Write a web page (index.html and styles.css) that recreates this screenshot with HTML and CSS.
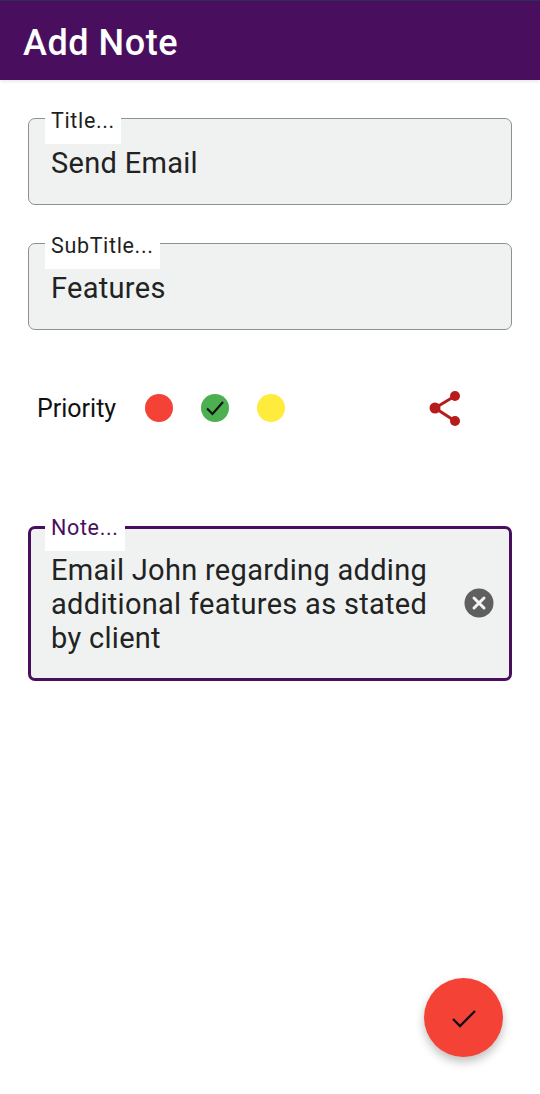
FILE: index.html
```html
<!DOCTYPE html>
<html lang="en">
<head>
    <meta charset="UTF-8">
    <meta name="viewport" content="width=device-width, initial-scale=1.0">
    <title>Add Note</title>
    <link rel="stylesheet" href="styles.css">
</head>
<body>
    <div class="app-bar">
        <h1>Add Note</h1>
    </div>

    <div class="content">
        <div class="field">
            <label class="field-label">Title...</label>
            <p class="field-text">Send Email</p>
        </div>

        <div class="field">
            <label class="field-label">SubTitle...</label>
            <p class="field-text">Features</p>
        </div>

        <div class="priority-row">
            <span class="priority-label">Priority</span>
            <span class="dot dot-red"></span>
            <span class="dot dot-green">
                <svg viewBox="0 0 28 28" width="28" height="28"><path d="M6 14.5l5.5 5.5 10.5-12" fill="none" stroke="#111" stroke-width="2.2"/></svg>
            </span>
            <span class="dot dot-yellow"></span>
            <svg class="share-icon" viewBox="0 0 36 40" width="36" height="40">
                <path d="M28 8L8 20l20 13" fill="none" stroke="#b71c1c" stroke-width="3"/>
                <circle cx="28" cy="8" r="5" fill="#b71c1c"/>
                <circle cx="8" cy="20" r="5.5" fill="#b71c1c"/>
                <circle cx="28" cy="33" r="5" fill="#b71c1c"/>
            </svg>
        </div>

        <div class="field field-focused">
            <label class="field-label">Note...</label>
            <p class="field-text">Email John regarding adding additional features as stated by client</p>
            <svg class="clear-icon" viewBox="0 0 30 30" width="30" height="30">
                <circle cx="15" cy="15" r="14.5" fill="#5f5f5f"/>
                <path d="M10 10l10 10M20 10L10 20" stroke="#f4f4f4" stroke-width="3" stroke-linecap="round"/>
            </svg>
        </div>
    </div>

    <button class="fab">
        <svg viewBox="0 0 28 28" width="28" height="28"><path d="M3 15l7 7L25 7" fill="none" stroke="#111" stroke-width="2.4"/></svg>
    </button>
</body>
</html>
```

FILE: styles.css
```css
* {
    box-sizing: border-box;
}

body {
    margin: 0;
    height: 1094px;
    overflow: hidden;
    font-family: Roboto, "Liberation Sans", sans-serif;
    background-color: #fff;
}

.app-bar {
    height: 80px;
    padding: 4px 23px 0;
    display: flex;
    align-items: center;
    background-color: #4a0e5e;
    border-top: 1px solid #2b2d55;
    box-shadow: 0 1px 4px rgba(0,0,0,0.12);
}

.app-bar h1 {
    margin: 0;
    font-size: 36px;
    font-weight: 500;
    letter-spacing: 0.55px;
    color: #fff;
}

.content {
    padding: 38px 28px 0;
}

.field {
    position: relative;
    min-height: 87px;
    margin-bottom: 38px;
    padding: 27px 22px 10px;
    background-color: #eff2f0;
    border: 1.5px solid #909090;
    border-radius: 7px;
}

.field-label {
    position: absolute;
    top: -16px;
    left: 16px;
    height: 41px;
    padding: 3px 6px 0;
    background-color: #fff;
    font-size: 21.5px;
    line-height: 30px;
    letter-spacing: 0.65px;
    color: #1f1f1f;
}

.field-text {
    margin: 0;
    font-size: 29px;
    line-height: 34px;
    letter-spacing: 0.3px;
    color: #222;
}

.priority-row {
    display: flex;
    align-items: center;
    height: 60px;
    margin: 48px 0 88px;
    padding-left: 9px;
}

.priority-label {
    width: 108px;
    font-size: 25px;
    color: #111;
}

.dot {
    width: 28px;
    height: 28px;
    margin-right: 28px;
    border-radius: 50%;
}

.dot svg {
    display: block;
}

.dot-red {
    background-color: #f44336;
}

.dot-green {
    background-color: #4caf50;
}

.dot-yellow {
    background-color: #ffeb3b;
}

.share-icon {
    margin-left: 114px;
}

.field-focused {
    height: 155px;
    margin-bottom: 0;
    padding: 24px 70px 0 20px;
    border: 3px solid #4a0e5e;
}

.field-focused .field-label {
    top: -19px;
    left: 14px;
    color: #4a0e5e;
}

.clear-icon {
    position: absolute;
    top: 59px;
    right: 15px;
}

.fab {
    position: fixed;
    left: 424px;
    top: 978px;
    width: 79px;
    height: 79px;
    padding: 0;
    display: flex;
    align-items: center;
    justify-content: center;
    background-color: #f44336;
    border: none;
    border-radius: 50%;
    box-shadow: 0 5px 10px rgba(0,0,0,0.25);
}
```
